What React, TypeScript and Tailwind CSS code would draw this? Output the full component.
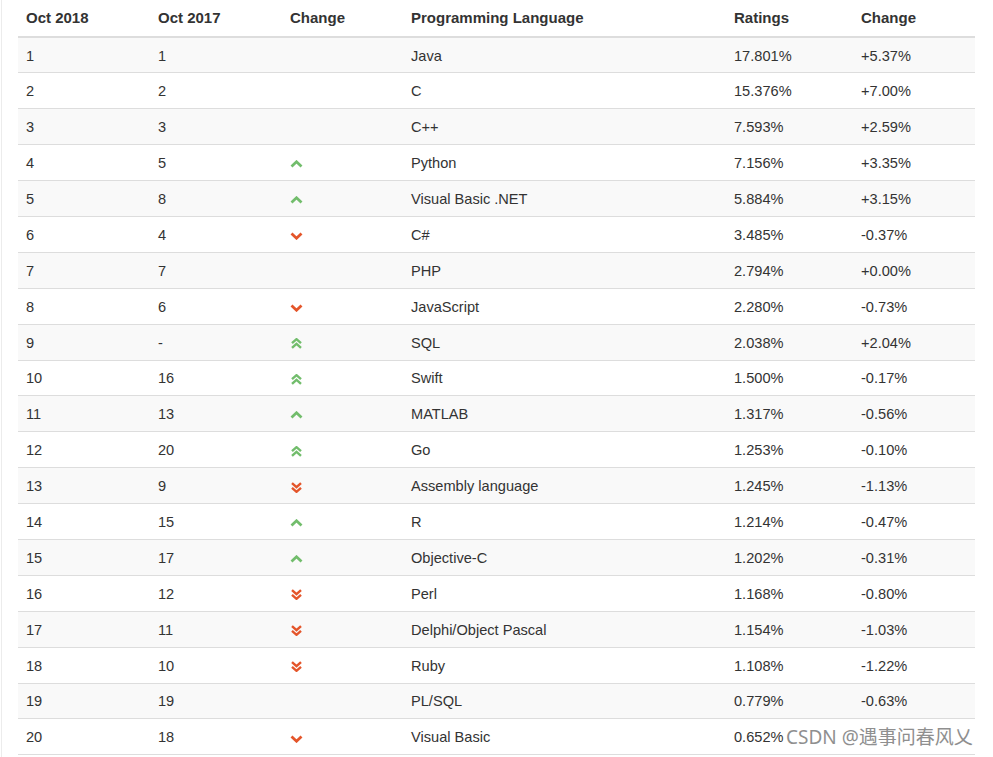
import React from "react";

type Dir = "" | "up" | "up2" | "down" | "down2";

const rows: [string, string, Dir, string, string, string][] = [
  ["1", "1", "", "Java", "17.801%", "+5.37%"],
  ["2", "2", "", "C", "15.376%", "+7.00%"],
  ["3", "3", "", "C++", "7.593%", "+2.59%"],
  ["4", "5", "up", "Python", "7.156%", "+3.35%"],
  ["5", "8", "up", "Visual Basic .NET", "5.884%", "+3.15%"],
  ["6", "4", "down", "C#", "3.485%", "-0.37%"],
  ["7", "7", "", "PHP", "2.794%", "+0.00%"],
  ["8", "6", "down", "JavaScript", "2.280%", "-0.73%"],
  ["9", "-", "up2", "SQL", "2.038%", "+2.04%"],
  ["10", "16", "up2", "Swift", "1.500%", "-0.17%"],
  ["11", "13", "up", "MATLAB", "1.317%", "-0.56%"],
  ["12", "20", "up2", "Go", "1.253%", "-0.10%"],
  ["13", "9", "down2", "Assembly language", "1.245%", "-1.13%"],
  ["14", "15", "up", "R", "1.214%", "-0.47%"],
  ["15", "17", "up", "Objective-C", "1.202%", "-0.31%"],
  ["16", "12", "down2", "Perl", "1.168%", "-0.80%"],
  ["17", "11", "down2", "Delphi/Object Pascal", "1.154%", "-1.03%"],
  ["18", "10", "down2", "Ruby", "1.108%", "-1.22%"],
  ["19", "19", "", "PL/SQL", "0.779%", "-0.63%"],
  ["20", "18", "down", "Visual Basic", "0.652%", ""],
];

const GREEN = "#72bd6c";
const RED = "#e4552a";

function Icon({ d }: { d: Dir }) {
  if (!d) return null;
  const up = d === "up" || d === "up2";
  const color = up ? GREEN : RED;
  const dbl = d === "up2" || d === "down2";
  if (!dbl) {
    return (
      <svg width="13" height="8" viewBox="0 0 13 8" className="inline-block align-middle">
        <polyline
          points={up ? "1.5,6.5 6.5,1.8 11.5,6.5" : "1.5,1.5 6.5,6.2 11.5,1.5"}
          fill="none"
          stroke={color}
          strokeWidth="2.8"
        />
      </svg>
    );
  }
  return (
    <svg width="13" height="11" viewBox="0 0 13 11" className="inline-block align-middle">
      {up ? (
        <>
          <polyline points="2,5.2 6.5,1.2 11,5.2" fill="none" stroke={color} strokeWidth="2.4" />
          <polyline points="2,9.8 6.5,5.8 11,9.8" fill="none" stroke={color} strokeWidth="2.4" />
        </>
      ) : (
        <>
          <polyline points="2,1.2 6.5,5.2 11,1.2" fill="none" stroke={color} strokeWidth="2.4" />
          <polyline points="2,5.8 6.5,9.8 11,5.8" fill="none" stroke={color} strokeWidth="2.4" />
        </>
      )}
    </svg>
  );
}

const td = "border-b border-[#dddddd] px-2 pt-[2px] pb-0 leading-[19px] align-middle";

export default function App() {
  return (
    <div
      className="relative h-[757px] w-[993px] overflow-hidden bg-white text-[14.6px] text-[#333]"
      style={{ fontFamily: '"Liberation Sans", Arial, sans-serif' }}
    >
      <div className="absolute left-[1px] top-0 h-full w-px bg-[#ececec]" />
      <div className="pl-[18px] pr-[18px]">
        <table className="w-[957px] table-fixed border-collapse">
          <colgroup>
            <col className="w-[132px]" />
            <col className="w-[132px]" />
            <col className="w-[121px]" />
            <col className="w-[323px]" />
            <col className="w-[127px]" />
            <col className="w-[122px]" />
          </colgroup>
          <thead>
            <tr>
              {["Oct 2018", "Oct 2017", "Change", "Programming Language", "Ratings", "Change"].map((h, i) => (
                <th
                  key={i}
                  className="border-b-2 border-[#dddddd] px-2 py-2 text-left text-[15px] font-bold leading-5"
                >
                  {h}
                </th>
              ))}
            </tr>
          </thead>
          <tbody>
            {rows.map((r, i) => (
              <tr key={i} className={i % 2 === 0 ? "bg-[#f9f9f9]" : "bg-white"}>
                <td className={`h-[35.9px] ${td}`}>{r[0]}</td>
                <td className={td}>{r[1]}</td>
                <td className={td}>
                  <Icon d={r[2]} />
                </td>
                <td className={td}>{r[3]}</td>
                <td className={td}>{r[4]}</td>
                <td className={td}>{r[5]}</td>
              </tr>
            ))}
          </tbody>
        </table>
      </div>
      <div
        className="absolute left-[786px] top-[725px] text-[19px] leading-[24px] text-[#8f8f8f]"
        style={{ fontFamily: '"Noto Sans", "Noto Sans CJK SC", sans-serif' }}
      >
        CSDN @遇事问春风乂
      </div>
    </div>
  );
}
